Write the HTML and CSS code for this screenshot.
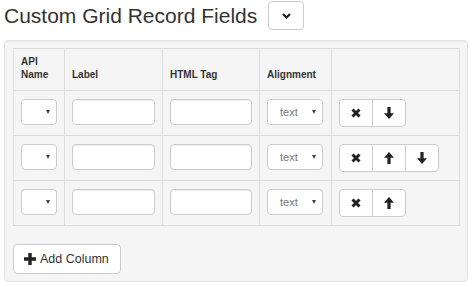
FILE: index.html
```html
<!DOCTYPE html>
<html lang="en">
<head>
  <meta charset="UTF-8" />
  <title>Custom Grid Record Fields</title>
  <link rel="stylesheet" href="styles.css">
</head>
<body>

  <div class="page-title">
    <h3>Custom Grid Record Fields</h3>
    <button type="button" class="btn btn-toggle">
      <svg width="9" height="6" viewBox="0 0 9 6"><path d="M1 1l3.5 3.5L8 1" fill="none" stroke="#222" stroke-width="2.2"/></svg>
    </button>
  </div>

  <div class="well">
    <table class="grid">
      <colgroup>
        <col style="width:51px">
        <col style="width:98px">
        <col style="width:97px">
        <col style="width:72px">
        <col style="width:128px">
      </colgroup>
      <thead>
        <tr>
          <th>API<br>Name</th>
          <th>Label</th>
          <th>HTML Tag</th>
          <th>Alignment</th>
          <th></th>
        </tr>
      </thead>
      <tbody>
        <tr>
          <td><div class="select select-api"><span class="select-val"></span><span class="caret"></span></div></td>
          <td><input type="text" class="form-control"></td>
          <td><input type="text" class="form-control"></td>
          <td><div class="select select-align"><span class="select-val">text</span><span class="caret"></span></div></td>
          <td>
            <div class="btn-group">
              <button type="button" class="btn"><svg width="10" height="10" viewBox="0 0 10 10"><path d="M1.5 1.5l7 7M8.5 1.5l-7 7" stroke="#222" stroke-width="3"/></svg></button>
              <button type="button" class="btn"><svg width="10" height="12" viewBox="0 0 10 12"><path d="M3.4 0h3.2v6.2H10L5 12 0 6.2h3.4z" fill="#222"/></svg></button>
            </div>
          </td>
        </tr>
        <tr>
          <td><div class="select select-api"><span class="select-val"></span><span class="caret"></span></div></td>
          <td><input type="text" class="form-control"></td>
          <td><input type="text" class="form-control"></td>
          <td><div class="select select-align"><span class="select-val">text</span><span class="caret"></span></div></td>
          <td>
            <div class="btn-group">
              <button type="button" class="btn"><svg width="10" height="10" viewBox="0 0 10 10"><path d="M1.5 1.5l7 7M8.5 1.5l-7 7" stroke="#222" stroke-width="3"/></svg></button>
              <button type="button" class="btn"><svg width="10" height="12" viewBox="0 0 10 12"><path d="M3.4 12h3.2V5.8H10L5 0 0 5.8h3.4z" fill="#222"/></svg></button>
              <button type="button" class="btn"><svg width="10" height="12" viewBox="0 0 10 12"><path d="M3.4 0h3.2v6.2H10L5 12 0 6.2h3.4z" fill="#222"/></svg></button>
            </div>
          </td>
        </tr>
        <tr>
          <td><div class="select select-api"><span class="select-val"></span><span class="caret"></span></div></td>
          <td><input type="text" class="form-control"></td>
          <td><input type="text" class="form-control"></td>
          <td><div class="select select-align"><span class="select-val">text</span><span class="caret"></span></div></td>
          <td>
            <div class="btn-group">
              <button type="button" class="btn"><svg width="10" height="10" viewBox="0 0 10 10"><path d="M1.5 1.5l7 7M8.5 1.5l-7 7" stroke="#222" stroke-width="3"/></svg></button>
              <button type="button" class="btn"><svg width="10" height="12" viewBox="0 0 10 12"><path d="M3.4 12h3.2V5.8H10L5 0 0 5.8h3.4z" fill="#222"/></svg></button>
            </div>
          </td>
        </tr>
      </tbody>
    </table>

    <button type="button" class="btn btn-add">
      <svg width="12" height="12" viewBox="0 0 12 12"><path d="M4.3 0h3.4v4.3H12v3.4H7.7V12H4.3V7.7H0V4.3h4.3z" fill="#222"/></svg>
      Add Column
    </button>
  </div>

</body>
</html>
```

FILE: styles.css
```css
body {
  margin: 0;
  padding: 1px 4px;
  font-family: 'Liberation Sans', Arial, sans-serif;
  color: #333;
  background: #fff;
}

.page-title {
  display: flex;
  align-items: center;
  height: 29px;
  margin-bottom: 10px;
}

.page-title h3 {
  margin: 0 11px 0 0;
  font-size: 21px;
  font-weight: normal;
  line-height: 29px;
}

.btn {
  display: inline-flex;
  align-items: center;
  justify-content: center;
  background: #fff;
  border: 1px solid #ccc;
  border-radius: 4px;
  padding: 0;
  font-family: inherit;
  color: #333;
  cursor: pointer;
}

.btn-toggle {
  width: 36px;
  height: 29px;
}

.well {
  width: 464px;
  box-sizing: border-box;
  background: #f5f5f5;
  border: 1px solid #e3e3e3;
  border-radius: 4px;
  box-shadow: inset 0 1px 1px rgba(0, 0, 0, 0.05);
  padding: 7px 8px 7px 8px;
}

.grid {
  width: 446px;
  table-layout: fixed;
  border-collapse: collapse;
  border: 1px solid #ddd;
}

.grid th,
.grid td {
  border: 1px solid #ddd;
  text-align: left;
}

.grid th {
  font-size: 10px;
  font-weight: bold;
  line-height: 13px;
  vertical-align: bottom;
  padding: 6px 7px 9px;
}

.grid td {
  vertical-align: top;
  padding: 8px 7px;
  height: 28px;
}

.form-control {
  display: block;
  width: 100%;
  height: 26px;
  box-sizing: border-box;
  border: 1px solid #ccc;
  border-radius: 4px;
  background: #fff;
  box-shadow: inset 0 1px 1px rgba(0, 0, 0, 0.075);
  outline: none;
}

.select {
  display: flex;
  align-items: center;
  height: 26px;
  box-sizing: border-box;
  border: 1px solid #ccc;
  border-radius: 4px;
  background: #fff;
  padding: 0 6px 0 12px;
}

.select-api {
  width: 36px;
}

.select-align {
  width: 56px;
}

.select-val {
  white-space: nowrap;
  font-size: 11px;
  color: #777;
}

.caret {
  margin-left: auto;
  width: 0;
  height: 0;
  border-left: 2.5px solid transparent;
  border-right: 2.5px solid transparent;
  border-top: 4px solid #444;
}

.btn-group {
  display: flex;
}

.btn-group .btn {
  width: 34px;
  height: 28px;
  border-radius: 0;
  margin-left: -1px;
}

.btn-group .btn:first-child {
  margin-left: 0;
  border-radius: 4px 0 0 4px;
}

.btn-group .btn:last-child {
  border-radius: 0 4px 4px 0;
}

.btn-add {
  margin-top: 18px;
  height: 30px;
  padding: 0 11px 0 10px;
  gap: 4px;
  font-size: 12.5px;
}
```
